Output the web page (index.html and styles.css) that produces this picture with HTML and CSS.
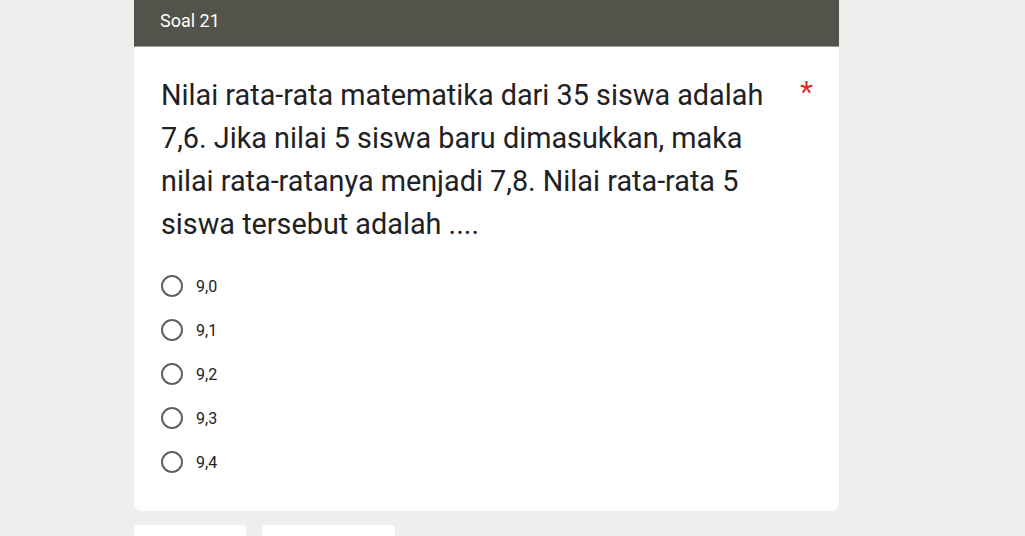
FILE: index.html
```html
<!DOCTYPE html>
<html>
<head>
<meta charset="utf-8">
<link rel="stylesheet" href="styles.css">
</head>
<body>
<div class="page">
  <div class="card">
    <div class="card-head">Soal 21</div>
    <div class="card-body">
      <div class="question">
        <div class="q-text">Nilai rata-rata matematika dari 35 siswa adalah 7,6. Jika nilai 5 siswa baru dimasukkan, maka nilai rata-ratanya menjadi 7,8. Nilai rata-rata 5 siswa tersebut adalah ....</div>
        <div class="req">*</div>
      </div>
      <div class="options">
        <div class="opt"><span class="radio"></span><span class="lbl">9,0</span></div>
        <div class="opt"><span class="radio"></span><span class="lbl">9,1</span></div>
        <div class="opt"><span class="radio"></span><span class="lbl">9,2</span></div>
        <div class="opt"><span class="radio"></span><span class="lbl">9,3</span></div>
        <div class="opt"><span class="radio"></span><span class="lbl">9,4</span></div>
      </div>
    </div>
  </div>
  <div class="buttons">
    <div class="btn btn1"></div>
    <div class="btn btn2"></div>
  </div>
</div>
</body>
</html>
```
FILE: styles.css
```css
html, body {
  margin: 0;
  padding: 0;
  background: #eeeeec;
  font-family: Roboto, "Liberation Sans", sans-serif;
  overflow: hidden;
}
.page {
  width: 705px;
  margin-left: 134px;
  height: 536px;
}
.card {
  background: #ffffff;
  border-radius: 0 0 8px 8px;
  overflow: hidden;
}
.card-head {
  height: 47px;
  background: #52534a;
  color: #ffffff;
  font-size: 18px;
  line-height: 41px;
  padding-left: 26px;
  border-bottom: 1px solid #9a9a94;
  box-sizing: border-box;
}
.card-body {
  padding: 27px 26px 27px 27px;
}
.question {
  display: flex;
  align-items: flex-start;
}
.q-text {
  width: 615px;
  font-size: 28.8px;
  line-height: 43px;
  color: #202124;
}
.req {
  margin-left: 24px;
  color: #d93025;
  font-size: 30px;
  line-height: 36px;
}
.options {
  margin-top: 18px;
  display: flex;
  flex-direction: column;
}
.opt {
  height: 44px;
  display: flex;
  align-items: center;
}
.radio {
  width: 18px;
  height: 18px;
  border: 2px solid #5f6368;
  border-radius: 50%;
  box-sizing: content-box;
  flex: none;
}
.lbl {
  margin-left: 13px;
  font-size: 16px;
  color: #202124;
}
.buttons {
  display: flex;
  gap: 16px;
  margin-top: 14px;
}
.btn {
  height: 30px;
  background: #ffffff;
  border-radius: 4px;
}
.btn1 { width: 112px; }
.btn2 { width: 133px; }
```
